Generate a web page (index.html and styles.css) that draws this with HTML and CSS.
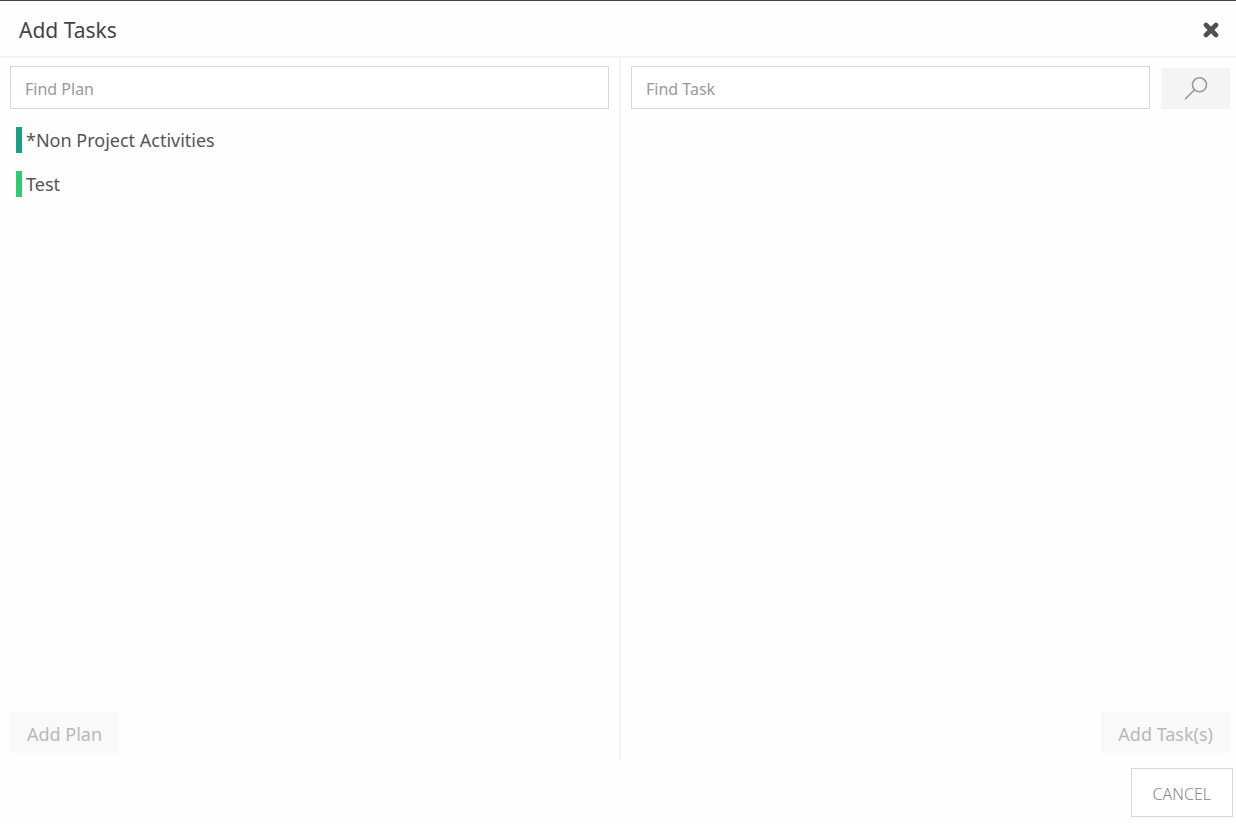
FILE: index.html
```
<!DOCTYPE html>
<html lang="en">
  <head>
    <meta charset="utf-8">
    <title>Add Tasks</title>
    <link rel="stylesheet" href="styles.css">
  </head>
  <body>
    <div class="dialog">
      <header class="dialog-header">
        <h1>Add Tasks</h1>
        <button type="button" class="close" aria-label="Close">
          <svg width="16" height="16" viewBox="0 0 16 16">
            <path d="M3 3L13 13M13 3L3 13" stroke="#505050" stroke-width="4.6" stroke-linecap="round"/>
          </svg>
        </button>
      </header>

      <main class="columns">
        <section class="column plans">
          <div class="search">
            <input type="text" aria-label="Find Plan" placeholder="Find Plan">
          </div>
          <ul class="plan-list">
            <li><span class="bar teal"></span>*Non Project Activities</li>
            <li><span class="bar green"></span>Test</li>
          </ul>
          <button type="button" class="add" disabled>Add Plan</button>
        </section>

        <section class="column tasks">
          <div class="search">
            <input type="text" aria-label="Find Task" placeholder="Find Task">
            <button type="button" class="find" aria-label="Search">
              <svg width="24" height="24" viewBox="0 0 24 24" fill="none" stroke="#999" stroke-width="1.6">
                <circle cx="15.5" cy="7.8" r="7"/>
                <path d="M10.5 12.8L1 22.3"/>
              </svg>
            </button>
          </div>
          <button type="button" class="add" disabled>Add Task(s)</button>
        </section>
      </main>

      <footer class="dialog-footer">
        <button type="button" class="cancel">CANCEL</button>
      </footer>
    </div>
  </body>
</html>
```
FILE: styles.css
```
* {
  box-sizing: border-box;
}

body {
  margin: 0;
  font-family: "Noto Sans", "Open Sans", sans-serif;
  font-size: 18px;
  color: #555;
  background: #fefefe;
}

button, input {
  font-family: inherit;
  margin: 0;
}

.dialog {
  display: flex;
  flex-direction: column;
  min-height: 100vh;
  border-top: 1px solid #444;
}

.dialog-header {
  display: flex;
  align-items: center;
  justify-content: space-between;
  height: 57px;
  padding: 2px 17px 0 19px;
  border-bottom: 2px solid #f4f4f4;
}

.dialog-header h1 {
  margin: 0;
  font-size: 21px;
  font-weight: normal;
  color: #444;
}

.close {
  display: flex;
  padding: 0;
  border: 0;
  background: none;
}

.columns {
  display: flex;
  flex: 1;
}

.column {
  display: flex;
  flex: 1;
  flex-direction: column;
  padding: 8px 6px 7px 10px;
}

.plans {
  padding-right: 10px;
  border-right: 2px solid #f4f4f4;
}

.search {
  display: flex;
  align-items: flex-end;
  gap: 11px;
}

.search input {
  flex: 1;
  min-width: 0;
  height: 43px;
  padding: 2px 14px 0;
  border: 1px solid #d8d8d8;
  border-radius: 0;
  background: #fff;
  font-size: 16px;
}

.search input::placeholder {
  color: #999;
}

.find {
  display: flex;
  align-items: center;
  justify-content: center;
  width: 69px;
  height: 41px;
  padding: 0;
  border: 0;
  background: #f4f4f4;
}

.plan-list {
  margin: 9px 0 0;
  padding: 0 6px;
  list-style: none;
}

.plan-list li {
  display: flex;
  align-items: center;
  gap: 4px;
  height: 44px;
}

.bar {
  width: 6px;
  height: 26px;
}

.teal {
  background: #16a085;
}

.green {
  background: #2ecc71;
}

.add {
  align-self: flex-start;
  height: 41px;
  margin-top: auto;
  padding: 2px 17px 0;
  border: 0;
  background: #f9f9f9;
  font-size: 18px;
  color: #b8b8b8;
}

.tasks .add {
  align-self: flex-end;
}

.dialog-footer {
  display: flex;
  justify-content: flex-end;
  padding: 8px 3px 7px;
}

.cancel {
  height: 49px;
  padding: 2px 21px 0;
  border: 1px solid #d8d8d8;
  background: #fff;
  font-size: 16px;
  font-weight: 300;
  color: #888;
}
```
